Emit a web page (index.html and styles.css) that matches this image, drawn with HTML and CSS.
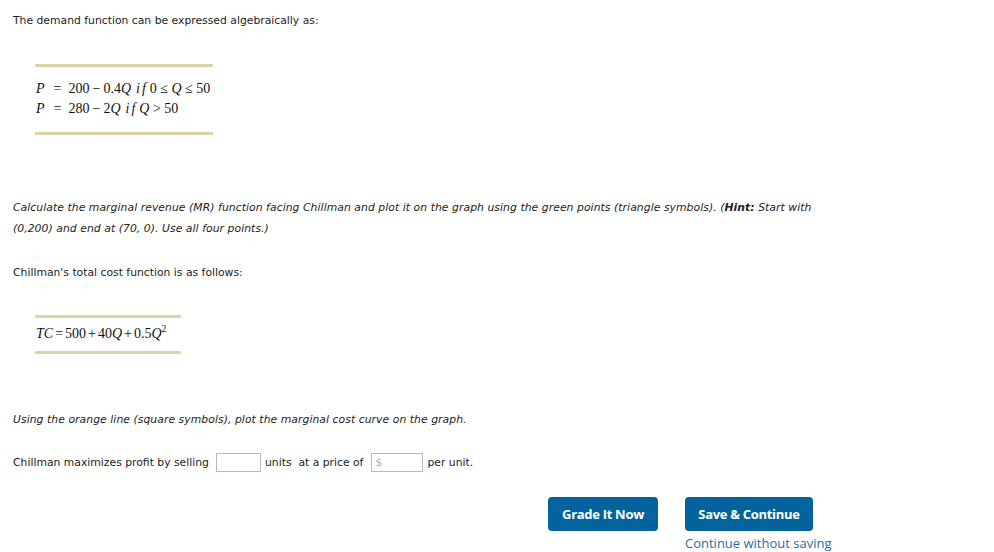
FILE: index.html
```html
<!DOCTYPE html>
<html>
<head>
<meta charset="utf-8">
<link rel="stylesheet" href="styles.css">
</head>
<body>
<div class="page">
  <p class="txt intro">The demand function can be expressed algebraically as:</p>
  <div class="math-box demand">
    <div class="mline"><i>P</i><span class="op">=</span>200<span class="bin">−</span>0.4<i>Q</i><span class="kw"><i>i</i><i class="f">f</i></span>0<span class="rel">≤</span><i>Q</i><span class="rel">≤</span>50</div>
    <div class="mline"><i>P</i><span class="op">=</span>280<span class="bin">−</span>2<i>Q</i><span class="kw"><i>i</i><i class="f">f</i></span><i>Q</i><span class="rel">&gt;</span>50</div>
  </div>
  <p class="txt it mr"><span>Calculate the marginal revenue (MR) function facing Chillman and plot it on the graph using the green points (triangle symbols). (<b>Hint:</b> Start with</span><br><span>(0,200) and end at (70, 0). Use all four points.)</span></p>
  <p class="txt tc-intro">Chillman's total cost function is as follows:</p>
  <div class="math-box tc">
    <div class="mline"><i>TC</i><span class="rel">=</span>500<span class="bin">+</span>40<i>Q</i><span class="bin">+</span>0.5<i>Q</i><sup>2</sup></div>
  </div>
  <p class="txt it mc">Using the orange line (square symbols), plot the marginal cost curve on the graph.</p>
  <div class="txt answer">
    <span>Chillman maximizes profit by selling</span>
    <span class="field units"></span>
    <span>units&nbsp; at a price of</span>
    <span class="field price">$</span>
    <span>per unit.</span>
  </div>
  <div class="actions">
    <button class="btn">Grade It Now</button>
    <div class="save-col">
      <button class="btn">Save &amp; Continue</button>
      <a class="link" href="#">Continue without saving</a>
    </div>
  </div>
</div>
</body>
</html>
```

FILE: styles.css
```css
html, body { margin: 0; padding: 0; background: #fff; }
.page {
  padding: 13px 13px 0 13px;
  color: #222;
  font-family: "DejaVu Sans", Verdana, sans-serif;
  font-size: 10.8px;
}
.txt { margin: 0; line-height: 15px; }
.it { font-style: italic; letter-spacing: 0.06px; }
.it b { font-style: italic; font-weight: 700; }
.math-box {
  margin-left: 22px;
  border-top: 3px solid #dcd3a9;
  border-bottom: 3px solid #dcd3a9;
  font-family: "Liberation Serif", "DejaVu Serif", serif;
  font-size: 14px;
  color: #111;
}
.math-box i { font-style: italic; }
.mline { line-height: 20px; white-space: nowrap; }
.demand { width: 177px; margin-top: 36px; padding: 12px 0 13px 1px; }
.op { padding: 0 7px 0 9px; }
.bin { padding: 0 3px; }
.rel { padding: 0 3.5px; }
.kw { padding: 0 4px 0 5px; }
.kw .f { margin-left: 2px; }
.mr { margin-top: 62px; line-height: 21px; width: 830px; }
.tc-intro { margin-top: 26px; }
.tc { width: 145px; margin-top: 35px; padding: 6px 0 7px 1px; }
.tc .rel { padding: 0 2px; }
.tc .bin { padding: 0 2px; }
.tc sup { font-size: 9.5px; line-height: 0; vertical-align: 6px; }
.mc { margin-top: 58px; }
.answer {
  margin-top: 26px;
  display: flex;
  align-items: center;
  gap: 4px;
}
.field {
  display: inline-block;
  height: 17px;
  border: 1px solid #b8b8b8;
  background: #fff;
  box-sizing: content-box;
  line-height: 17px;
  color: #b0b0b0;
  padding-left: 3px;
}
.units { width: 40px; margin: 0 0 0 3px; }
.price { width: 47px; margin-left: 4px; }
.actions {
  margin-top: 25px;
  display: flex;
  align-items: flex-start;
  gap: 27px;
  padding-left: 535px;
}
.save-col { display: flex; flex-direction: column; align-items: flex-start; }
.btn {
  background: #03639c;
  color: #fff;
  border: none;
  border-radius: 4px;
  height: 34px;
  font-family: "Open Sans", sans-serif;
  font-weight: 700;
  font-size: 13px;
  letter-spacing: -0.3px;
  padding: 0;
}
.actions > .btn { width: 110px; }
.save-col .btn { width: 128px; }
.link {
  margin-top: 4px;
  line-height: 17px;
  color: #1f6ea3;
  text-decoration: none;
  font-family: "Open Sans", sans-serif;
  font-size: 13px;
}
```
